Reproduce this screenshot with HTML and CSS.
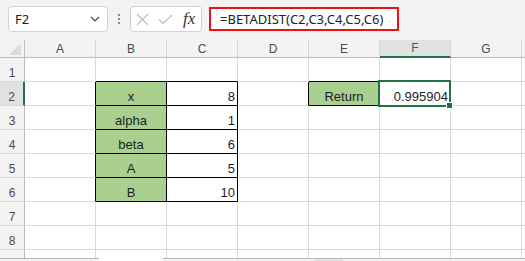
FILE: index.html
```html
<!DOCTYPE html>
<html lang="en">
<head>
    <meta charset="UTF-8">
    <title>BETADIST</title>
    <link rel="stylesheet" href="styles.css">
</head>
<body>
    <div class="app">
        <div class="toolbar">
            <div class="namebox">
                <span>F2</span>
                <svg class="chev" width="10" height="6" viewBox="0 0 10 6"><path d="M1 1 L5 5 L9 1" fill="none" stroke="#444" stroke-width="1.2"/></svg>
            </div>
            <div class="dots"><i></i><i></i><i></i></div>
            <div class="fxbox">
                <svg width="13" height="13" viewBox="0 0 13 13"><path d="M1 1 L12 12 M12 1 L1 12" stroke="#bdbdbd" stroke-width="1.2"/></svg>
                <svg width="15" height="11" viewBox="0 0 15 11"><path d="M1 5.5 L5 9.5 L14 1" fill="none" stroke="#bdbdbd" stroke-width="1.2"/></svg>
                <span class="fx">fx</span>
            </div>
            <div class="formula">=BETADIST(C2,C3,C4,C5,C6)</div>
        </div>

        <div class="sheet">
            <div class="c corner"><span class="tri"></span></div>
            <div class="c ch">A</div>
            <div class="c ch">B</div>
            <div class="c ch">C</div>
            <div class="c ch">D</div>
            <div class="c ch">E</div>
            <div class="c ch active">F</div>
            <div class="c ch">G</div>
            <div class="c ch"></div>

            <div class="c rh">1</div>
            <div class="c"></div>
            <div class="c kb"></div>
            <div class="c kb"></div>
            <div class="c"></div>
            <div class="c kb"></div>
            <div class="c"></div>
            <div class="c"></div>
            <div class="c"></div>

            <div class="c rh active">2</div>
            <div class="c kr"></div>
            <div class="c lab kr kb">x</div>
            <div class="c num kr kb">8</div>
            <div class="c kr"></div>
            <div class="c lab kr kb">Return</div>
            <div class="c num sel">0.995904</div>
            <div class="c"></div>
            <div class="c"></div>

            <div class="c rh">3</div>
            <div class="c kr"></div>
            <div class="c lab kr kb">alpha</div>
            <div class="c num kr kb">1</div>
            <div class="c"></div>
            <div class="c"></div>
            <div class="c"></div>
            <div class="c"></div>
            <div class="c"></div>

            <div class="c rh">4</div>
            <div class="c kr"></div>
            <div class="c lab kr kb">beta</div>
            <div class="c num kr kb">6</div>
            <div class="c"></div>
            <div class="c"></div>
            <div class="c"></div>
            <div class="c"></div>
            <div class="c"></div>

            <div class="c rh">5</div>
            <div class="c kr"></div>
            <div class="c lab kr kb">A</div>
            <div class="c num kr kb">5</div>
            <div class="c"></div>
            <div class="c"></div>
            <div class="c"></div>
            <div class="c"></div>
            <div class="c"></div>

            <div class="c rh">6</div>
            <div class="c kr"></div>
            <div class="c lab kr kb">B</div>
            <div class="c num kr kb">10</div>
            <div class="c"></div>
            <div class="c"></div>
            <div class="c"></div>
            <div class="c"></div>
            <div class="c"></div>

            <div class="c rh">7</div>
            <div class="c"></div>
            <div class="c"></div>
            <div class="c"></div>
            <div class="c"></div>
            <div class="c"></div>
            <div class="c"></div>
            <div class="c"></div>
            <div class="c"></div>

            <div class="c rh">8</div>
            <div class="c"></div>
            <div class="c"></div>
            <div class="c"></div>
            <div class="c"></div>
            <div class="c"></div>
            <div class="c"></div>
            <div class="c"></div>
            <div class="c"></div>

            <div class="c rh"></div>
            <div class="c"></div>
            <div class="c"></div>
            <div class="c"></div>
            <div class="c"></div>
            <div class="c"></div>
            <div class="c"></div>
            <div class="c"></div>
            <div class="c"></div>
        </div>

        <div class="tabs">
            <div class="tab"></div>
            <div class="tab current"></div>
            <div class="tab rest"><span class="thumb"></span></div>
        </div>
    </div>
</body>
</html>
```

FILE: styles.css
```css
body {
    margin: 0;
    background: #fff;
}
.app {
    width: 525px;
    height: 261px;
    overflow: hidden;
    display: flex;
    flex-direction: column;
}

/* formula bar */
.toolbar {
    height: 40px;
    flex: none;
    box-sizing: border-box;
    background: #f3f3f3;
    display: flex;
    align-items: flex-start;
    padding: 6px 0 0 8px;
    font-family: "Noto Sans", sans-serif;
    font-size: 13px;
    color: #222;
}
.namebox {
    width: 100px;
    height: 26px;
    box-sizing: border-box;
    background: #fff;
    border: 1px solid #d2d2d2;
    border-radius: 4px;
    display: flex;
    align-items: center;
    justify-content: space-between;
    padding: 0 7px 0 6px;
}
.dots {
    width: 22px;
    height: 26px;
    display: flex;
    flex-direction: column;
    align-items: center;
    justify-content: center;
    gap: 2px;
}
.dots i {
    width: 2px;
    height: 2px;
    background: #8a8a8a;
}
.fxbox {
    width: 72px;
    height: 26px;
    box-sizing: border-box;
    background: #fff;
    border: 1px solid #d2d2d2;
    border-radius: 4px;
    display: flex;
    align-items: center;
    gap: 9px;
    padding-left: 5px;
}
.fx {
    font-family: "Liberation Serif", serif;
    font-style: italic;
    font-size: 17px;
    color: #333;
    margin-left: 1px;
}
.formula {
    margin: 1px 0 0 7px;
    width: 190px;
    height: 24px;
    box-sizing: border-box;
    border: 2px solid #f01010;
    background: #fff;
    padding-left: 9px;
    line-height: 20px;
    white-space: nowrap;
}

/* grid */
.sheet {
    flex: 1;
    overflow: hidden;
    display: grid;
    grid-template-columns: 25px repeat(8, 71px);
    grid-template-rows: 18px repeat(9, 24px);
    font-family: "Liberation Sans", sans-serif;
    font-size: 13px;
    color: #1e1e28;
}
.c {
    box-sizing: border-box;
    border-right: 1px solid #dadada;
    border-bottom: 1px solid #dadada;
    display: flex;
    align-items: flex-end;
    line-height: 16px;
    white-space: nowrap;
}
.ch, .rh, .corner {
    background: #f3f3f3;
    color: #4a4a4a;
    font-size: 12px;
    justify-content: center;
}
.ch {
    align-items: center;
    border-right-color: #d6d6d6;
    border-bottom-color: #bdbdbd;
}
.rh {
    border-right-color: #bdbdbd;
    border-bottom-color: #d6d6d6;
}
.corner {
    border-right-color: #bdbdbd;
    border-bottom-color: #bdbdbd;
    align-items: flex-end;
    justify-content: flex-end;
    padding: 0 3px 2px 0;
}
.tri {
    width: 0;
    height: 0;
    border-left: 12px solid transparent;
    border-bottom: 12px solid #dcdcdc;
}
.ch.active {
    background: #e1e1e1;
    color: #1d6b40;
    border-bottom: 2px solid #217346;
}
.rh.active {
    background: #e1e1e1;
    border-right: 2px solid #217346;
}
.lab {
    background: #a9d08e;
    justify-content: center;
}
.num {
    justify-content: flex-end;
    padding-right: 2px;
}
.kr { border-right-color: #000; }
.kb { border-bottom-color: #000; }
.sel {
    position: relative;
}
.sel::after {
    content: "";
    position: absolute;
    left: -2px;
    right: -1px;
    top: -2px;
    bottom: -2px;
    border: 2px solid #217346;
}
.sel::before {
    content: "";
    position: absolute;
    right: -3px;
    bottom: -4px;
    width: 5px;
    height: 5px;
    background: #217346;
    border: 1px solid #fff;
    z-index: 1;
}

/* sheet tabs strip */
.tabs {
    height: 3px;
    flex: none;
    display: flex;
    background: #f0f0f0;
}
.tab {
    width: 99px;
    border-top: 1px solid #b4b4b4;
    background: #f3f3f3;
}
.tab.current {
    width: 64px;
    border-top-color: #fff;
    background: #fff;
}
.tab.rest {
    flex: 1;
    padding-left: 152px;
}
.thumb {
    display: block;
    width: 28px;
    height: 3px;
    background: #e4e4e4;
}
```
